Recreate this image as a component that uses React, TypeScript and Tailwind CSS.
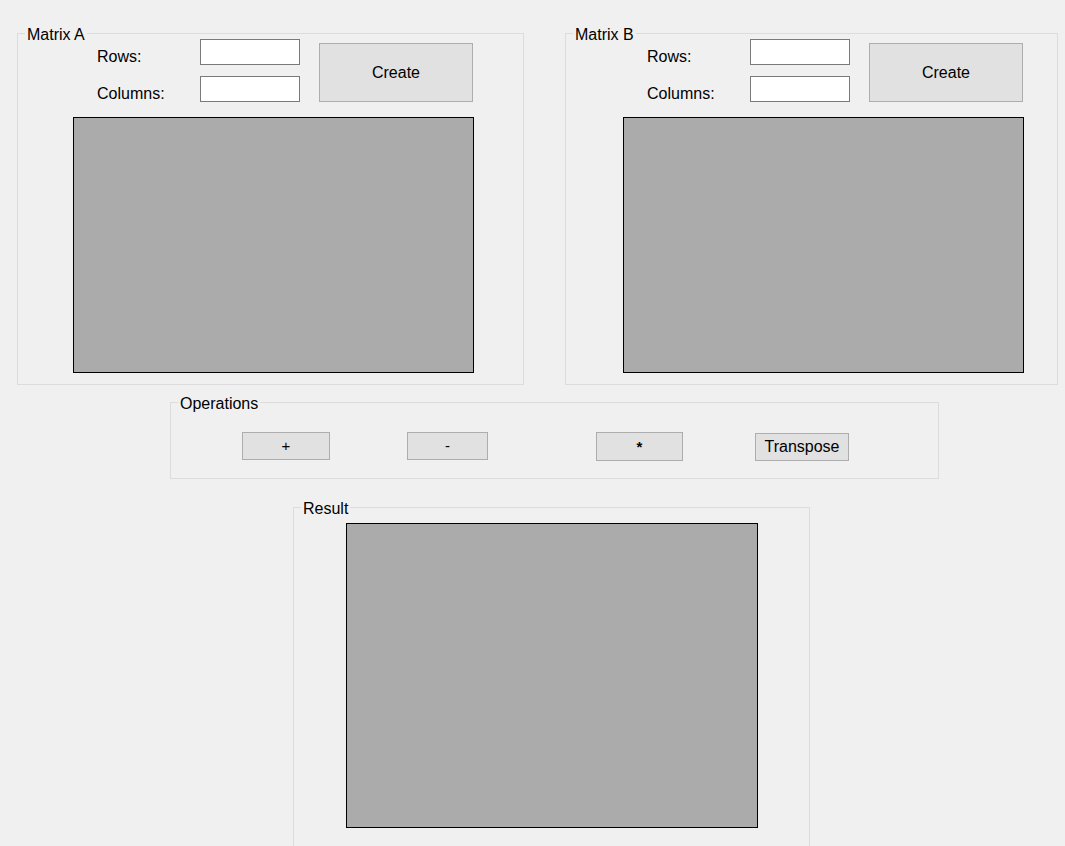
import type { ReactNode } from 'react';

function GroupBox({ title, className, children }: { title: string; className: string; children: ReactNode }) {
    return (
        <div className={`relative border border-[#dcdcdc] ${className}`}>
            <span className="absolute top-[-8px] left-[7px] px-[2px] bg-[#f0f0f0] leading-[18px] whitespace-nowrap">
                {title}
            </span>
            {children}
        </div>
    );
}

function Grid({ className }: { className: string }) {
    return <div className={`border border-black bg-[#ababab] ${className}`} />;
}

function MatrixInput({ title, className }: { title: string; className: string }) {
    return (
        <GroupBox title={title} className={className}>
            <div className="flex">
                <div className="ml-[24px] flex flex-col gap-[11px]">
                    <div className="flex">
                        <div className="w-[103px] h-[26px] pt-[9px] leading-[18px]">Rows:</div>
                        <input className="w-[100px] h-[26px] border border-[#7a7a7a] bg-white px-1 outline-none" />
                    </div>
                    <div className="flex">
                        <div className="w-[103px] h-[26px] pt-[9px] leading-[18px]">Columns:</div>
                        <input className="w-[100px] h-[26px] border border-[#7a7a7a] bg-white px-1 outline-none" />
                    </div>
                </div>
                <button className="ml-[19px] mt-[4px] w-[154px] h-[59px] border border-[#adadad] bg-[#e1e1e1] leading-[18px]">
                    Create
                </button>
            </div>
            <Grid className="mt-[15px] w-[401px] h-[256px]" />
        </GroupBox>
    );
}

const opButton = 'h-[28px] border border-[#adadad] bg-[#e1e1e1] text-[15px] leading-[18px] text-black';

export default function App() {
    return (
        <div className="h-screen w-full overflow-hidden bg-[#f0f0f0] pt-[33px] text-[16px] text-black font-['Liberation_Sans',Arial,sans-serif]">
            <div className="flex gap-[41px] pl-[17px]">
                <MatrixInput title="Matrix A" className="w-[507px] h-[352px] pl-[55px] pt-[5px]" />
                <MatrixInput title="Matrix B" className="w-[493px] h-[352px] pl-[57px] pt-[5px]" />
            </div>

            <GroupBox title="Operations" className="ml-[170px] mt-[17px] w-[769px] h-[77px] pt-[29px]">
                <div className="flex items-start">
                    <button className={`${opButton} ml-[71px] w-[88px]`}>+</button>
                    <button className={`${opButton} ml-[77px] w-[81px]`}>-</button>
                    <button className={`${opButton} ml-[108px] w-[87px] h-[29px] font-bold`}>*</button>
                    <button className="ml-[72px] mt-[1px] w-[94px] h-[28px] border border-[#adadad] bg-[#e1e1e1] leading-[18px]">
                        Transpose
                    </button>
                </div>
            </GroupBox>

            <GroupBox title="Result" className="ml-[293px] mt-[28px] w-[517px] h-[360px] pl-[52px] pt-[15px]">
                <Grid className="w-[412px] h-[305px]" />
            </GroupBox>
        </div>
    );
}
